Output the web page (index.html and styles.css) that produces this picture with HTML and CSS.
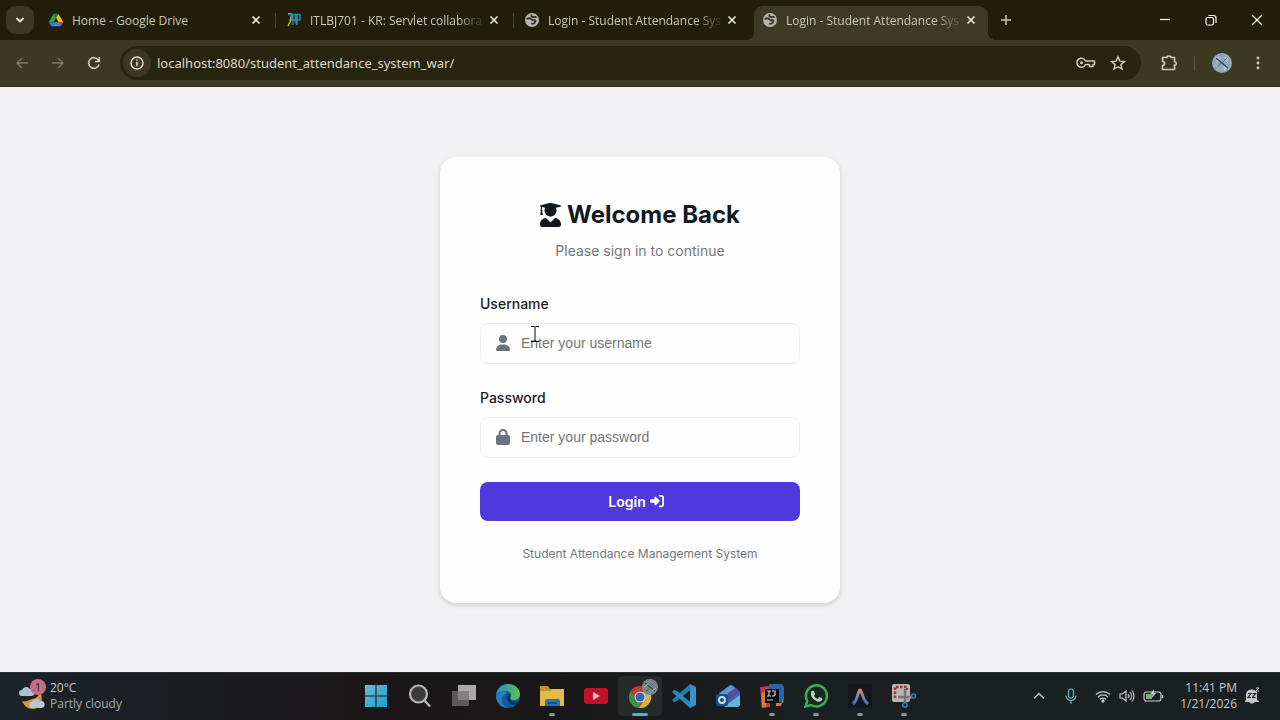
FILE: index.html
```html
<!DOCTYPE html>
<html lang="en">
<head>
    <meta charset="UTF-8">
    <meta name="viewport" content="width=device-width, initial-scale=1.0">
    <title>Login - Student Attendance System</title>
    <link rel="stylesheet" href="styles.css">
</head>
<body>
    <svg class="sprite" width="0" height="0" aria-hidden="true">
        <symbol id="close" viewBox="0 0 10 10"><path d="M1.500 1.500l7 7M8.500 1.500l-7 7" fill="none" stroke="currentColor" stroke-width="1.600"/></symbol>
        <symbol id="globe" viewBox="0 0 16 16">
            <circle cx="8" cy="8" r="8" fill="#b5b5b1"/>
            <path d="M2 7q3-2 5 0t4 1q2 1 0 3t-4 1M8 2Q6 4 9 4.500t4-.5" fill="none" stroke="#3a372a" stroke-width="2.200"/>
        </symbol>
    </svg>

    <!-- Browser tabs -->
    <header class="tab-strip">
        <button class="tab-search" aria-label="Search tabs">
            <svg width="10" height="10" viewBox="0 0 10 10"><path d="M1.500 3L5 6.500 8.500 3" fill="none" stroke="currentColor" stroke-width="1.800"/></svg>
        </button>
        <div class="tab">
            <svg class="favicon" viewBox="0 0 87 78">
                <path d="M6.600 66.850l3.850 6.650c.8 1.400 1.950 2.500 3.300 3.300L27.500 53H0c0 1.550.4 3.100 1.200 4.500z" fill="#3f78e0"/>
                <path d="M43.650 25L29.900 1.200c-1.350.8-2.500 1.900-3.300 3.300L1.200 48.500C.4 49.900 0 51.450 0 53h27.500z" fill="#24a756"/>
                <path d="M73.550 76.800c1.350-.8 2.500-1.900 3.300-3.300L86.100 57.500c.8-1.400 1.200-2.950 1.200-4.500H59.800l5.850 11.500z" fill="#e04638"/>
                <path d="M43.650 25L57.400 1.200C56.050.4 54.500 0 52.900 0H34.400c-1.600 0-3.150.45-4.500 1.200z" fill="#16863a"/>
                <path d="M59.800 53H27.500L13.750 76.800c1.350.8 2.900 1.200 4.500 1.200h50.800c1.600 0 3.150-.45 4.500-1.200z" fill="#4285f4"/>
                <path d="M73.400 26.500L60.700 4.500c-.8-1.400-1.950-2.500-3.300-3.300L43.650 25 59.800 53h27.450c0-1.550-.4-3.100-1.200-4.500z" fill="#f9b90a"/>
            </svg>
            <span class="tab-title">Home - Google Drive</span>
            <button class="tab-close" aria-label="Close tab"><svg><use href="#close"/></svg></button>
        </div>
        <div class="tab">
            <svg class="favicon" viewBox="0 0 14 14">
                <path d="M1 1h3.500v5L1 13M4.500 2L3 8" stroke="#b8cf3c" fill="none" stroke-width="1.300"/>
                <path d="M1 1.500h3.500V8M6 12V1.500h2.500V7H6M10 12V1.500h3V7h-3M8 7l1.500 4" stroke="#2d87b3" fill="none" stroke-width="1.500"/>
            </svg>
            <span class="tab-title fade">ITLBJ701 - KR: Servlet collabora</span>
            <button class="tab-close" aria-label="Close tab"><svg><use href="#close"/></svg></button>
        </div>
        <div class="tab tab-last">
            <svg class="favicon"><use href="#globe"/></svg>
            <span class="tab-title fade">Login - Student Attendance Sys</span>
            <button class="tab-close" aria-label="Close tab"><svg><use href="#close"/></svg></button>
        </div>
        <div class="tab tab-active">
            <svg class="favicon"><use href="#globe"/></svg>
            <span class="tab-title fade">Login - Student Attendance Sys</span>
            <button class="tab-close" aria-label="Close tab"><svg><use href="#close"/></svg></button>
        </div>
        <button class="new-tab" aria-label="New tab">
            <svg width="12" height="12" viewBox="0 0 12 12"><path d="M6 1v10M1 6h10" stroke="currentColor" stroke-width="1.500"/></svg>
        </button>
        <div class="window-controls">
            <button aria-label="Minimize"><svg width="12" height="12" viewBox="0 0 12 12"><path d="M1 5.500h10" stroke="currentColor" stroke-width="1.200"/></svg></button>
            <button aria-label="Restore"><svg width="12" height="12" viewBox="0 0 12 12" fill="none" stroke="currentColor" stroke-width="1.200"><rect x="1" y="3.500" width="7.500" height="7.500" rx="1.800"/><path d="M3.500 1.500h5a2.500 2.500 0 0 1 2.500 2.500v5"/></svg></button>
            <button aria-label="Close"><svg width="12" height="12" viewBox="0 0 12 12"><path d="M1 1l10 10M11 1L1 11" stroke="currentColor" stroke-width="1.300"/></svg></button>
        </div>
    </header>

    <!-- Address bar -->
    <nav class="toolbar">
        <button class="tool dim" aria-label="Back"><svg width="14" height="14" viewBox="0 0 14 14"><path d="M13 7H2M7 2L2 7l5 5" fill="none" stroke="currentColor" stroke-width="1.400"/></svg></button>
        <button class="tool dim" aria-label="Forward"><svg width="14" height="14" viewBox="0 0 14 14"><path d="M1 7h11M7 2l5 5-5 5" fill="none" stroke="currentColor" stroke-width="1.400"/></svg></button>
        <button class="tool" aria-label="Reload"><svg width="14" height="14" viewBox="0 0 14 14"><path d="M12 8.500A5.300 5.300 0 1 1 11.500 4.300L12 5M12.300 1v4.500H8" fill="none" stroke="currentColor" stroke-width="1.600"/></svg></button>
        <div class="address-bar">
            <button class="site-info" aria-label="View site information">
                <svg width="14" height="14" viewBox="0 0 14 14"><circle cx="7" cy="7" r="6" fill="none" stroke="currentColor" stroke-width="1.400"/><path d="M7 6v4.200M7 3.500V5" stroke="currentColor" stroke-width="1.500"/></svg>
            </button>
            <input class="url" type="text" aria-label="Address" value="localhost:8080/student_attendance_system_war/">
            <button class="tool" aria-label="Passwords"><svg width="20" height="12" viewBox="0 0 20 12" fill="none" stroke="currentColor" stroke-width="1.500"><path d="M9.500 4H18.500V7.500H17V9.500H13.500V7.500H9.500A4.500 4.500 0 1 1 9.500 4z" stroke-linejoin="round"/><circle cx="5.500" cy="5.800" r="1.500" fill="currentColor" stroke="none"/></svg></button>
            <button class="tool" aria-label="Bookmark"><svg width="16" height="16" viewBox="0 0 16 16"><path d="M8 1.800l1.800 4.300 4.700.4-3.600 3.100 1.100 4.500-4-2.400-4 2.400 1.100-4.500L1.500 6.500l4.700-.4z" fill="none" stroke="currentColor" stroke-width="1.400"/></svg></button>
        </div>
        <button class="tool extensions" aria-label="Extensions"><svg width="18" height="18" viewBox="0 0 18 18"><path d="M2.500 3.500H7a2 1.500 0 0 1 4 0h3.500v4.200a1.700 1.700 0 0 1 0 3.400v4.400h-12v-4a2 2 0 0 0 0-4z" fill="none" stroke="currentColor" stroke-width="1.600" stroke-linejoin="round"/></svg></button>
        <span class="divider"></span>
        <button class="tool profile" aria-label="Profile">
            <svg width="20" height="20" viewBox="0 0 20 20"><circle cx="10" cy="10" r="10" fill="#8ea7ba"/><path d="M3 5l4-2 2 3-4 4zM12 2l5 5-3 2zM11 13l4-1 1 3-4 3zM2 12l4 1 1 4z" fill="#b0c2cd"/><path d="M4 5l12 10" stroke="#33485a" stroke-width="1.500"/><path d="M10 10l5-5M9 10l-4 5" stroke="#5b7182"/></svg>
        </button>
        <button class="tool" aria-label="Menu"><svg width="4" height="16" viewBox="0 0 4 16" fill="currentColor"><circle cx="2" cy="3" r="1.400"/><circle cx="2" cy="8" r="1.400"/><circle cx="2" cy="13" r="1.400"/></svg></button>
    </nav>

    <!-- Login page -->
    <main class="page">
        <div class="login-container">
            <div class="login-header">
                <h1>
                    <svg class="title-icon" viewBox="0 0 448 512"><path d="M319.400 320.600L224 416l-95.400-95.400C57.100 323.700 0 382.200 0 454.400v9.600c0 26.500 21.500 48 48 48h352c26.500 0 48-21.500 48-48v-9.600c0-72.200-57.100-130.700-128.600-133.800zM13.600 79.800l6.400 1.500v58.400c-7 4.200-12 11.500-12 20.300 0 8.400 4.600 15.400 11.100 19.700L3.500 242c-1.700 6.900 2.100 14 7.600 14h41.800c5.500 0 9.300-7.100 7.600-14l-15.600-62.300C51.400 175.400 56 168.400 56 160c0-8.800-5-16.100-12-20.300V87.100l66 15.900c-8.600 17.200-14 36.400-14 57 0 70.700 57.300 128 128 128s128-57.300 128-128c0-20.600-5.300-39.800-14-57l96.300-23.200c18.200-4.400 18.200-27.100 0-31.500l-190.400-46c-13-3.100-26.700-3.100-39.700 0L13.600 48.200c-18.100 4.400-18.100 27.200 0 31.600z"/></svg>
                    Welcome Back
                </h1>
                <p>Please sign in to continue</p>
            </div>
            <form action="login" method="POST">
                <div class="form-group">
                    <label for="username">Username</label>
                    <div class="input-box">
                        <svg class="input-icon" viewBox="0 0 448 512"><path d="M224 256A128 128 0 1 0 224 0a128 128 0 1 0 0 256zm-45.700 48C79.800 304 0 383.800 0 482.300C0 498.700 13.300 512 29.700 512l388.600 0c16.400 0 29.700-13.300 29.700-29.700C448 383.800 368.200 304 269.700 304l-91.400 0z"/></svg>
                        <input type="text" id="username" name="username" placeholder="Enter your username" required>
                        <svg class="cursor" width="10" height="18" viewBox="0 0 10 18"><path d="M1 1.500h3.500M5.500 1.500H9M5 1.500v15M1 16.500h8" fill="none" stroke="#000"/></svg>
                    </div>
                </div>
                <div class="form-group">
                    <label for="password">Password</label>
                    <div class="input-box">
                        <svg class="input-icon" viewBox="0 0 448 512"><path d="M144 144l0 48 160 0 0-48c0-44.200-35.800-80-80-80s-80 35.800-80 80zM80 192l0-48C80 64.500 144.500 0 224 0s144 64.500 144 144l0 48 16 0c35.300 0 64 28.700 64 64l0 192c0 35.300-28.700 64-64 64L64 512c-35.300 0-64-28.700-64-64L0 256c0-35.300 28.700-64 64-64l16 0z"/></svg>
                        <input type="password" id="password" name="password" placeholder="Enter your password" required>
                    </div>
                </div>
                <button class="login-btn" type="submit">
                    Login
                    <svg viewBox="0 0 512 512"><path d="M217.900 105.900L340.700 228.700c7.200 7.200 11.300 17.100 11.300 27.300s-4.100 20.100-11.300 27.300L217.900 406.100c-6.400 6.400-15 9.900-24 9.900c-18.700 0-33.900-15.200-33.900-33.900l0-62.100L32 320c-17.700 0-32-14.300-32-32l0-64c0-17.700 14.300-32 32-32l128 0 0-62.100c0-18.700 15.200-33.900 33.900-33.900c9 0 17.600 3.600 24 9.900zM352 416l64 0c17.700 0 32-14.300 32-32l0-256c0-17.700-14.300-32-32-32l-64 0c-17.700 0-32-14.300-32-32s14.300-32 32-32l64 0c53 0 96 43 96 96l0 256c0 53-43 96-96 96l-64 0c-17.700 0-32-14.300-32-32s14.300-32 32-32z"/></svg>
                </button>
            </form>
            <p class="footer">Student Attendance Management System</p>
        </div>
    </main>

    <!-- Taskbar -->
    <footer class="taskbar">
        <button class="weather">
            <span class="weather-icon">
                <svg width="26" height="28" viewBox="0 0 26 28">
                    <path d="M13 17c4 0 7-3 8-7 4 7 1 17-7 17-5 0-9-3-11-8 3 1 6 0 10-2z" fill="#dd963b"/>
                    <path d="M3 14a3 3 0 0 1 0-6 4.500 4.500 0 0 1 8-1 3.500 3.500 0 0 1 2 7z" fill="#afbfd8"/>
                    <path d="M13 26a3 3 0 0 1 0-6 4.500 4.500 0 0 1 8-1 3.500 3.500 0 0 1 2 7z" fill="#b5c7dc"/>
                </svg>
                <span class="badge">1</span>
            </span>
            <span class="weather-text"><span>20°C</span><span class="sky">Partly cloudy</span></span>
        </button>
        <div class="apps">
            <button class="app" aria-label="Start"><svg viewBox="0 0 24 24"><defs><linearGradient id="win" x2="1" y2="1"><stop stop-color="#69bed0"/><stop offset="1" stop-color="#219bcb"/></linearGradient></defs><path d="M1 1h10.500v10.500H1zM12.500 1H23v10.500H12.500zM1 12.500h10.500V23H1zM12.500 12.500H23V23H12.500z" fill="url(#win)"/></svg></button>
            <button class="app" aria-label="Search"><svg viewBox="0 0 24 24"><circle cx="10.500" cy="10" r="8.500" fill="#3b3a3c" stroke="#b9b7b7" stroke-width="2.200"/><path d="M16.500 16.500l5.500 6" stroke="#b9b7b7" stroke-width="2.500"/></svg></button>
            <button class="app" aria-label="Task view"><svg viewBox="0 0 24 24"><path d="M6 1h18v15H6z" fill="#aaa8a8"/><path d="M0 7h17v15H0z" fill="#5c5a5b"/><path d="M6 7h11v9H6z" fill="#838182"/></svg></button>
            <button class="app" aria-label="Edge"><svg viewBox="0 0 24 24"><defs><linearGradient id="edge" x2="1"><stop stop-color="#238fc4"/><stop offset="1" stop-color="#63bd51"/></linearGradient></defs><circle cx="12" cy="12" r="12" fill="#12599b"/><path d="M0 11C1 4 6 0 12 0c7 0 12 5 12 10 0 4-3 6-6 6s-4-1-4-2 1-1 1-3-2-4-5-4c-5 0-9 2-10 4z" fill="url(#edge)"/><path d="M10 7C3 8 0 11 0 13c1 7 6 11 12 11-5-2-7-6-6-10 1-3 3-4 5-5z" fill="#267cc0"/><path d="M14 14c0 3 4 5 9 3l-2 3c-5 2-10-1-10-6 0-2 1-4 3-4 1 1 1 2 0 4z" fill="#17354c"/></svg></button>
            <button class="app running" aria-label="File Explorer"><svg viewBox="0 0 24 24"><path d="M0 2h8l2 3h14v17H0z" fill="#c59324"/><path d="M0 7h10l3-2h11v17H0z" fill="#e1bb45"/><path d="M5 22v-5q0-2 2-2h11q2 0 2 2v5z" fill="#2477b3"/><path d="M8 18h9v2H8z" fill="#154f7f"/></svg></button>
            <button class="app" aria-label="YouTube"><svg viewBox="0 0 24 24"><rect y="4" width="24" height="16" rx="3" fill="#c3102b"/><path d="M9 8l7 4-7 4z" fill="#d9c7c9"/></svg></button>
            <button class="app running focused" aria-label="Chrome"><svg viewBox="0 0 24 24"><circle cx="12" cy="13" r="11" fill="#bf3a31"/><path d="M2.500 7.500L8 17l4 1-1 6A11 11 0 0 1 2.500 7.500z" fill="#3b913f"/><path d="M13 8h9a11 11 0 0 1-11 16l6-9z" fill="#d9b33b"/><circle cx="12" cy="13" r="5.500" fill="#d3d8db"/><circle cx="12" cy="13" r="4.500" fill="#306ab7"/></svg>
                <svg class="app-profile" viewBox="0 0 16 16"><circle cx="8" cy="8" r="8" fill="#79868c"/><path d="M3 4l10 8" stroke="#39464e" stroke-width="1.300"/><path d="M8 8l5-5M8 8l-4 5" stroke="#56636b"/><path d="M2 8l4-3M10 12l4-3" stroke="#b2bdc2"/></svg></button>
            <button class="app" aria-label="Visual Studio Code"><svg viewBox="0 0 24 24"><path d="M18 0l6 3v18l-6 3z" fill="#3694ca"/><path d="M18 0L0 16l2 2 3-1L18 6z" fill="#247dac"/><path d="M18 24L0 8l2-2 3 1 13 11z" fill="#2c89be"/></svg></button>
            <button class="app" aria-label="Outlook"><svg viewBox="0 0 24 24"><path d="M3 9L14 1q1-.5 2 0l8 7v11q0 3-3 3H6z" fill="#2d70b9"/><path d="M4 9L15 1l4 3L8 14z" fill="#6496cc"/><path d="M12 9l8-5 4 4-12 9z" fill="#5949a0"/><path d="M8 23l16-12v9q0 3-3 3z" fill="#69b5dc"/><rect y="10" width="12" height="12" rx="2" fill="#16538c"/><circle cx="6" cy="16" r="3" fill="none" stroke="#d1dde4" stroke-width="1.800"/></svg></button>
            <button class="app running" aria-label="IntelliJ IDEA"><svg viewBox="0 0 24 24"><path d="M0 3l10-1v21L2 24z" fill="#c33856"/><path d="M9 0h13l2 3v15l-12 1z" fill="#2466ac"/><path d="M1 10l5-4v17l-4 1zM16 19h7v-5l-2 8h-5z" fill="#d37d33"/><path d="M5 5h14v14H5z" fill="#09090b"/><path d="M7 7h4M9 7v5M7 12h4M12 7h3v4l-1 1h-2M7 16h6" fill="none" stroke="#d0d0d0" stroke-width="1.200"/></svg></button>
            <button class="app running" aria-label="WhatsApp"><svg viewBox="0 0 24 24"><path d="M1.500 22.500l1.800-5.500a10.500 10.500 0 1 1 4 4z" fill="#162820" stroke="#36ac5d" stroke-width="2.500"/><path d="M7 8q1-2 3-1l1 3-1 2q1 2 4 3l1-2 3 1q1 2-1 3-3 2-7-1.500T7 8z" fill="#bacbc0"/></svg></button>
            <button class="app running" aria-label="Android tools"><svg viewBox="0 0 24 24"><defs><linearGradient id="arc" x2="0" y2="1"><stop stop-color="#de8950"/><stop offset=".5" stop-color="#7188b8"/><stop offset="1" stop-color="#3779c6"/></linearGradient></defs><path d="M0 0h24v24H0z" fill="#14181c"/><path d="M5 20c5-4 5-14 7-14s2 10 8 14" fill="none" stroke="url(#arc)" stroke-width="3"/></svg></button>
            <button class="app running" aria-label="Snipping Tool"><svg viewBox="0 0 24 24"><rect width="18" height="18" rx="2" fill="#b9b5b5"/><path d="M3 14V3h12v3" fill="none" stroke="#9d3432" stroke-width="2.500" stroke-dasharray="2.500 1.500"/><path d="M13 5v13M6 13h14" stroke="#717579" stroke-width="2.500"/><path d="M14 17l5-4" stroke="#9aa3a8" stroke-width="2"/><circle cx="21.500" cy="12" r="2" fill="none" stroke="#3384b4" stroke-width="1.500"/><circle cx="13" cy="21" r="2.200" fill="none" stroke="#3384b4" stroke-width="1.500"/></svg></button>
        </div>
        <div class="tray">
            <button aria-label="Show hidden icons"><svg width="12" height="12" viewBox="0 0 12 12"><path d="M1 8.500l5-5 5 5" fill="none" stroke="currentColor" stroke-width="1.300"/></svg></button>
            <button class="mic" aria-label="Microphone"><svg width="12" height="16" viewBox="0 0 12 16" fill="none" stroke="currentColor" stroke-width="1.200"><rect x="3.500" y="1" width="5" height="9" rx="2.500"/><path d="M1 7.500a5 5 0 0 0 10 0M6 12.500V16"/></svg></button>
            <button class="status" aria-label="Network, volume and battery">
                <svg width="16" height="14" viewBox="0 0 16 14" fill="none" stroke="currentColor" stroke-width="1.300"><path d="M1 5.500a10 10 0 0 1 14 0M3 8a7 7 0 0 1 10 0M5 10.500a4 4 0 0 1 6 0"/><circle cx="8" cy="12" r="1" fill="currentColor"/></svg>
                <svg width="16" height="14" viewBox="0 0 16 14" fill="none" stroke="currentColor" stroke-width="1.200"><path d="M1 5h2.500L7 2v10L3.500 9H1zM9 5q1.500 2 0 4M11 3q3 4 0 8M13 1.500q4 5.500 0 11"/></svg>
                <svg width="21" height="14" viewBox="0 0 21 14"><rect x="1" y="3" width="17" height="9" rx="2.500" fill="none" stroke="currentColor" stroke-width="1.200"/><path d="M3 5h6v5H3z" fill="#78b368"/><path d="M19.500 6v3" stroke="currentColor" stroke-width="1.500"/><path d="M11 0L7.500 5h2L9 9l4-5h-2z" fill="currentColor"/></svg>
            </button>
            <button class="clock"><span>11:41 PM</span><span>1/21/2026</span></button>
            <button class="bell" aria-label="Notifications"><svg width="16" height="18" viewBox="0 0 16 18"><path d="M2 13V7a6 5.500 0 0 1 11-2v8l2 1v1H1v-1zM5 15h6q-3 3-6 0z" fill="#c4c7c8"/><path d="M4 6.500h3L4 10.500h3M8.500 6.500h3l-3 4h3" fill="none" stroke="#1b2022" stroke-width="1.200"/><path d="M12 1h3l-3 3h3" fill="none" stroke="#c4c7c8"/></svg></button>
        </div>
    </footer>
</body>
</html>
```
FILE: styles.css
```css
* {
    box-sizing: border-box;
}
body {
    margin: 0;
    min-height: 100vh;
    display: flex;
    flex-direction: column;
    font-family: 'Inter', sans-serif;
    background: #f2f2f5;
}
button {
    border: none;
    padding: 0;
    background: none;
    color: inherit;
    font-family: inherit;
    cursor: pointer;
}
svg {
    display: block;
    flex-shrink: 0;
}
.sprite {
    position: absolute;
}

/* Browser tabs */
.tab-strip {
    display: flex;
    align-items: flex-end;
    height: 40px;
    padding-left: 6px;
    background: #211f09;
    color: #c9c7b7;
    font-family: 'Open Sans', sans-serif;
}
.tab-search {
    display: flex;
    align-items: center;
    justify-content: center;
    width: 28px;
    height: 28px;
    margin: 0 4px 6px 0;
    border-radius: 9px;
    background: #3a3722;
    color: #f0eede;
}
.tab {
    position: relative;
    display: flex;
    align-items: center;
    flex: 0 1 238px;
    min-width: 0;
    height: 34px;
    padding: 0 12px 6px 11px;
    font-size: 12px;
}
.tab::after {
    content: "";
    position: absolute;
    right: 0;
    top: 7px;
    width: 1px;
    height: 15px;
    background: #45422e;
}
.tab-last::after {
    display: none;
}
.favicon {
    width: 14px;
    height: 14px;
    margin-right: 9px;
}
.tab-title {
    flex: 1;
    overflow: hidden;
    white-space: nowrap;
}
.fade {
    -webkit-mask-image: linear-gradient(to right, #000 84%, transparent);
    mask-image: linear-gradient(to right, #000 84%, transparent);
}
.tab-close {
    width: 16px;
    padding: 3px;
    color: #eeecdd;
}
.tab-close svg {
    width: 10px;
    height: 10px;
}
.tab-active {
    flex-basis: 234px;
    margin-left: 2px;
    padding: 0 9px 6px;
    background: #3e3b25;
    border-radius: 9px 9px 0 0;
}
.tab-active::before,
.tab-active::after {
    content: "";
    position: absolute;
    top: auto;
    bottom: 0;
    width: 8px;
    height: 8px;
}
.tab-active::before {
    left: -8px;
    background: radial-gradient(circle at 0 0, transparent 8px, #3e3b25 8px);
}
.tab-active::after {
    right: -8px;
    background: radial-gradient(circle at 100% 0, transparent 8px, #3e3b25 8px);
}
.new-tab {
    padding: 8px;
    margin: 0 4px 6px;
}
.window-controls {
    display: flex;
    margin-left: auto;
    color: #fbf9ee;
}
.window-controls button {
    display: flex;
    justify-content: center;
    align-items: center;
    width: 46px;
    height: 40px;
}

/* Address bar */
.toolbar {
    display: flex;
    align-items: center;
    height: 47px;
    padding: 0 8px;
    background: #3c3922;
    border-bottom: 1px solid #2e2b18;
    color: #d0cdb9;
}
.tool {
    display: flex;
    align-items: center;
    justify-content: center;
    width: 28px;
    height: 28px;
    margin-right: 8px;
}
.dim {
    color: #7c7963;
}
.address-bar {
    flex: 1;
    display: flex;
    align-items: center;
    height: 34px;
    margin-left: 4px;
    padding: 0 0 0 3px;
    border-radius: 17px;
    background: #28250f;
}
.address-bar .tool {
    margin: 0 1px 0 3px;
}
.address-bar .tool:last-child {
    margin-right: 9px;
}
.site-info {
    display: flex;
    align-items: center;
    justify-content: center;
    width: 28px;
    height: 28px;
    border-radius: 50%;
    background: #3a3722;
    color: #e6e3d2;
}
.url {
    flex: 1;
    min-width: 0;
    border: none;
    padding: 0 0 0 6px;
    outline: none;
    background: none;
    color: #dddbc9;
    font-family: 'Noto Sans', sans-serif;
    font-size: 13px;
}
.extensions {
    margin: 0 11px 0 14px;
}
.divider {
    width: 1px;
    height: 15px;
    margin-right: 13px;
    background: #5b583f;
}
.toolbar > .tool:last-child {
    margin-right: 0;
}

/* Login page */
.page {
    flex: 1;
    display: flex;
    align-items: center;
    justify-content: center;
    padding: 20px;
}
.login-container {
    width: 100%;
    max-width: 400px;
    padding: 40px;
    border-radius: 16px;
    background: #fefefe;
    box-shadow: 0 2px 5px rgba(0, 0, 0, 0.16);
}
.login-header {
    margin-bottom: 32px;
    text-align: center;
}
h1 {
    display: flex;
    align-items: center;
    justify-content: center;
    gap: 6px;
    margin: 0 0 6px;
    color: #111820;
    font-size: 24px;
    font-weight: 700;
    line-height: 36px;
}
.title-icon {
    width: 21px;
    height: 24px;
    fill: #111820;
}
.login-header p {
    margin: 0;
    color: #74777c;
    font-size: 14px;
    line-height: 23px;
}
.form-group {
    margin-bottom: 24px;
}
.form-group label {
    display: block;
    margin-bottom: 9px;
    color: #1a2028;
    font-size: 14px;
    font-weight: 500;
    line-height: 20px;
}
.input-box {
    position: relative;
    display: flex;
    align-items: center;
    height: 41px;
    padding-left: 15px;
    border: 1px solid #eeeff1;
    border-radius: 8px;
}
.input-icon {
    width: 14px;
    height: 16px;
    fill: #6b7280;
}
.input-box input {
    flex: 1;
    min-width: 0;
    height: 100%;
    padding: 0 11px;
    border: none;
    outline: none;
    background: none;
    font-family: 'Liberation Sans', sans-serif;
    font-size: 14px;
}
.input-box input::placeholder {
    color: #757575;
}
.input-box:focus-within {
    border-color: #4f39dc;
}
.cursor {
    position: absolute;
    left: 49px;
    top: 1px;
}
.login-btn {
    display: flex;
    align-items: center;
    justify-content: center;
    gap: 4px;
    width: 100%;
    height: 39px;
    padding-right: 8px;
    border-radius: 8px;
    background: #4f39dc;
    color: #fff;
    font-size: 14px;
    font-weight: 600;
}
.login-btn:hover {
    background: #4330c4;
}
.login-btn svg {
    width: 14px;
    height: 14px;
    fill: #fff;
}
.footer {
    margin: 24px 0 0;
    color: #74777c;
    font-size: 12px;
    line-height: 18px;
    text-align: center;
}

/* Taskbar */
.taskbar {
    display: grid;
    grid-template-columns: 1fr auto 1fr;
    align-items: center;
    height: 48px;
    padding-bottom: 2px;
    background: linear-gradient(to right, #1b2329, #1b1719 28%, #191818 45%, #1a2022 65%, #1a2022);
    border-top: 1px solid #2b3032;
    color: #c6c9ca;
    font-family: 'Open Sans', sans-serif;
    font-size: 12px;
}
.weather {
    display: flex;
    align-items: center;
    gap: 5px;
    padding-left: 19px;
    font-size: 12px;
    text-align: left;
}
.weather-icon {
    position: relative;
}
.badge {
    position: absolute;
    left: 11px;
    top: -3px;
    width: 16px;
    height: 16px;
    border-radius: 50%;
    background: #c36f82;
    color: #211a1d;
    font-size: 11px;
    line-height: 16px;
    text-align: center;
}
.weather-text {
    display: flex;
    flex-direction: column;
    line-height: 16px;
}
.sky {
    color: #a4a9ac;
}
.apps {
    display: flex;
}
.app {
    position: relative;
    display: flex;
    align-items: center;
    justify-content: center;
    width: 44px;
    height: 40px;
}
.app svg {
    width: 24px;
    height: 24px;
}
.running::after {
    content: "";
    position: absolute;
    left: 19px;
    bottom: 0;
    width: 6px;
    height: 3px;
    border-radius: 2px;
    background: #8e9192;
}
.focused {
    border-radius: 4px;
    background: #262a2b;
}
.focused::after {
    left: 14px;
    width: 16px;
    background: #5fa9cd;
}
.app .app-profile {
    position: absolute;
    right: 4px;
    top: 3px;
    width: 16px;
    height: 16px;
}
.tray {
    display: flex;
    align-items: center;
    justify-content: flex-end;
    padding-right: 20px;
}
.mic {
    margin: 0 18px 0 20px;
    color: #6fb6bd;
}
.status {
    display: flex;
    align-items: center;
    gap: 8px;
    margin-right: 16px;
}
.clock {
    display: flex;
    flex-direction: column;
    align-items: flex-end;
    margin-right: 7px;
    font-size: 12px;
    line-height: 16px;
}
```
